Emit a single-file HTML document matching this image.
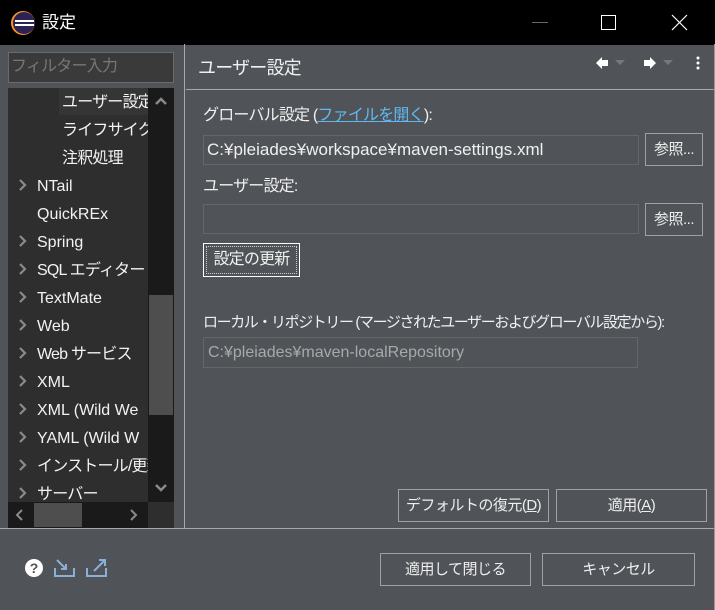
<!DOCTYPE html>
<html><head><meta charset="utf-8"><style>
*{margin:0;padding:0;box-sizing:border-box}
body{width:715px;height:610px;overflow:hidden;background:#505458;font-family:"Liberation Sans","Noto Sans CJK JP",sans-serif;font-size:15px;color:#f0f0f0;position:relative;line-height:20px}
.a{position:absolute;white-space:nowrap}
.title{left:0;top:0;width:715px;height:45px;background:#000}
.btn{position:absolute;border:1px solid #a0a0a0;color:#eee;text-align:center;font-size:15px;letter-spacing:-0.5px}
.inp{position:absolute;border:1px solid #666;background:#505458}
.it{position:absolute;left:37px;font-size:16px;color:#f2f2f2;line-height:20px;height:20px}
.j{letter-spacing:-0.8px}
.chev{position:absolute;left:19px}
</style></head><body>
<div class="a title"></div>
<svg class="a" style="left:10px;top:10px" width="26" height="26" viewBox="0 0 26 26"><circle cx="13" cy="13" r="12" fill="#f7941e"/><circle cx="14" cy="13" r="11" fill="#2c2255"/><rect x="5" y="10" width="19" height="2" fill="#fff"/><rect x="5" y="14" width="19" height="2" fill="#fff"/></svg>
<div class="a" style="left:42px;top:13px;font-size:17px;color:#fff">設定</div>
<div class="a" style="left:532px;top:22px;width:16px;height:1px;background:#666"></div>
<div class="a" style="left:601px;top:15px;width:15px;height:15px;border:1px solid #fff"></div>
<svg class="a" style="left:671px;top:14px" width="17" height="17"><path d="M1 1L16 16M16 1L1 16" stroke="#fff" stroke-width="1.2"/></svg>
<div class="a" style="left:714px;top:44px;width:1px;height:566px;background:#999"></div>
<div class="a" style="left:8px;top:52px;width:166px;height:31px;border:1px solid #6a6a6a;background:#3a3a3a"></div>
<div class="a j" style="left:11px;top:57px;font-size:16px;color:#777">フィルター入力</div>
<div class="a" style="left:8px;top:88px;width:140px;height:414px;background:#2e2e2e;overflow:hidden">
<div class="a" style="left:51px;top:0;width:97px;height:27px;background:#353535"></div>
<div class="it j" style="left:54px;top:5px">ユーザー設定</div>
<div class="it j" style="left:54px;top:33px">ライフサイクル</div>
<div class="it j" style="left:54px;top:61px">注釈処理</div>
<div class="it" style="left:29px;top:89px">NTail</div>
<div class="it" style="left:29px;top:117px">QuickREx</div>
<div class="it" style="left:29px;top:145px">Spring</div>
<div class="it j" style="left:29px;top:173px">SQL エディター</div>
<div class="it" style="left:29px;top:201px">TextMate</div>
<div class="it" style="left:29px;top:229px">Web</div>
<div class="it j" style="left:29px;top:257px">Web サービス</div>
<div class="it" style="left:29px;top:285px">XML</div>
<div class="it" style="left:29px;top:313px">XML (Wild We</div>
<div class="it" style="left:29px;top:341px">YAML (Wild W</div>
<div class="it j" style="left:29px;top:369px">インストール/更新</div>
<div class="it j" style="left:29px;top:397px">サーバー</div>
</div>
<svg class="a" style="left:18px;top:178px" width="10" height="330"><g stroke="#8a8a8a" stroke-width="2.2" fill="none">
<path d="M2 2L7 7L2 12"/><path d="M2 58L7 63L2 68"/><path d="M2 86L7 91L2 96"/><path d="M2 114L7 119L2 124"/><path d="M2 142L7 147L2 152"/><path d="M2 170L7 175L2 180"/><path d="M2 198L7 203L2 208"/><path d="M2 226L7 231L2 236"/><path d="M2 254L7 259L2 264"/><path d="M2 282L7 287L2 292"/><path d="M2 310L7 315L2 320"/></g></svg>
<div class="a" style="left:148px;top:88px;width:26px;height:414px;background:#1a1a1a"></div>
<div class="a" style="left:149px;top:295px;width:24px;height:120px;background:#4e4e4e"></div>
<svg class="a" style="left:154px;top:96px" width="14" height="10"><path d="M2 8L7 3L12 8" stroke="#8a8a8a" stroke-width="2.5" fill="none"/></svg>
<svg class="a" style="left:154px;top:483px" width="14" height="10"><path d="M2 2L7 7L12 2" stroke="#8a8a8a" stroke-width="2.5" fill="none"/></svg>
<div class="a" style="left:8px;top:502px;width:140px;height:26px;background:#1a1a1a"></div>
<div class="a" style="left:148px;top:502px;width:26px;height:26px;background:#2e2e2e"></div>
<div class="a" style="left:34px;top:503px;width:48px;height:24px;background:#4e4e4e"></div>
<svg class="a" style="left:14px;top:508px" width="10" height="14"><path d="M8 2L3 7L8 12" stroke="#8a8a8a" stroke-width="2" fill="none"/></svg>
<svg class="a" style="left:129px;top:508px" width="10" height="14"><path d="M2 2L7 7L2 12" stroke="#8a8a8a" stroke-width="2" fill="none"/></svg>
<div class="a" style="left:184px;top:44px;width:1px;height:485px;background:#a8a8a8"></div>
<div class="a" style="left:186px;top:89px;width:528px;height:1px;background:#a8a8a8"></div>
<div class="a" style="left:0;top:528px;width:714px;height:1px;background:#a8a8a8"></div>
<div class="a j" style="left:198px;top:58px;font-size:18px;color:#f0f0f0">ユーザー設定</div>
<svg class="a" style="left:594px;top:55px" width="112" height="16"><path d="M2 8L8 2V5H14V11H8V14Z" fill="#fff"/><path d="M21 5L31 5L26 10Z" fill="#777"/><path d="M62 8L56 2V5H50V11H56V14Z" fill="#fff"/><path d="M69 5L79 5L74 10Z" fill="#777"/><circle cx="104" cy="3" r="1.5" fill="#fff"/><circle cx="104" cy="8" r="1.5" fill="#fff"/><circle cx="104" cy="13" r="1.5" fill="#fff"/></svg>
<div class="a j" style="left:203px;top:106px;font-size:16px">グローバル設定 (<span style="color:#5fb8f0;text-decoration:underline">ファイルを開く</span>):</div>
<div class="inp" style="left:203px;top:135px;width:436px;height:30px"></div>
<div class="a" style="left:207px;top:140px;font-size:17px">C:¥pleiades¥workspace¥maven-settings.xml</div>
<div class="btn" style="left:645px;top:133px;width:58px;height:33px;line-height:31px">参照...</div>
<div class="a j" style="left:203px;top:177px;font-size:16px">ユーザー設定:</div>
<div class="inp" style="left:203px;top:204px;width:436px;height:30px"></div>
<div class="btn" style="left:645px;top:203px;width:58px;height:33px;line-height:31px">参照...</div>
<div class="a" style="left:203px;top:243px;width:97px;height:34px;border:1px solid #fff;padding:2px"><div class="j" style="border:1px dotted #ccc;height:100%;font-size:16px;line-height:26px;text-align:center">設定の更新</div></div>
<div class="a" style="left:203px;top:313px;font-size:15px;letter-spacing:-1.4px">ローカル・リポジトリー (マージされたユーザーおよびグローバル設定から):</div>
<div class="inp" style="left:203px;top:337px;width:435px;height:31px"></div>
<div class="a" style="left:208px;top:343px;font-size:16px;color:#a8a8a8">C:¥pleiades¥maven-localRepository</div>
<div class="btn" style="left:398px;top:489px;width:151px;height:33px;line-height:31px">デフォルトの復元(<u>D</u>)</div>
<div class="btn" style="left:556px;top:489px;width:151px;height:33px;line-height:31px">適用(<u>A</u>)</div>
<div class="btn" style="left:380px;top:553px;width:151px;height:33px;line-height:31px">適用して閉じる</div>
<div class="btn" style="left:542px;top:553px;width:153px;height:33px;line-height:31px">キャンセル</div>
<svg class="a" style="left:24px;top:558px" width="86" height="22"><circle cx="10" cy="10" r="9" fill="#fff"/><text x="10" y="15" text-anchor="middle" font-family="Liberation Sans" font-weight="bold" font-size="14" fill="#505458">?</text><path d="M31 10V18H50V10" stroke="#8ab0d8" stroke-width="2" fill="none"/><path d="M33 2L42 11M42 6V11H37" stroke="#8ab0d8" stroke-width="2" fill="none"/><path d="M63 10V18H82V10" stroke="#8ab0d8" stroke-width="2" fill="none"/><path d="M70 13L80 3M75 2H81V8" stroke="#8ab0d8" stroke-width="2" fill="none"/></svg>
</body></html>
